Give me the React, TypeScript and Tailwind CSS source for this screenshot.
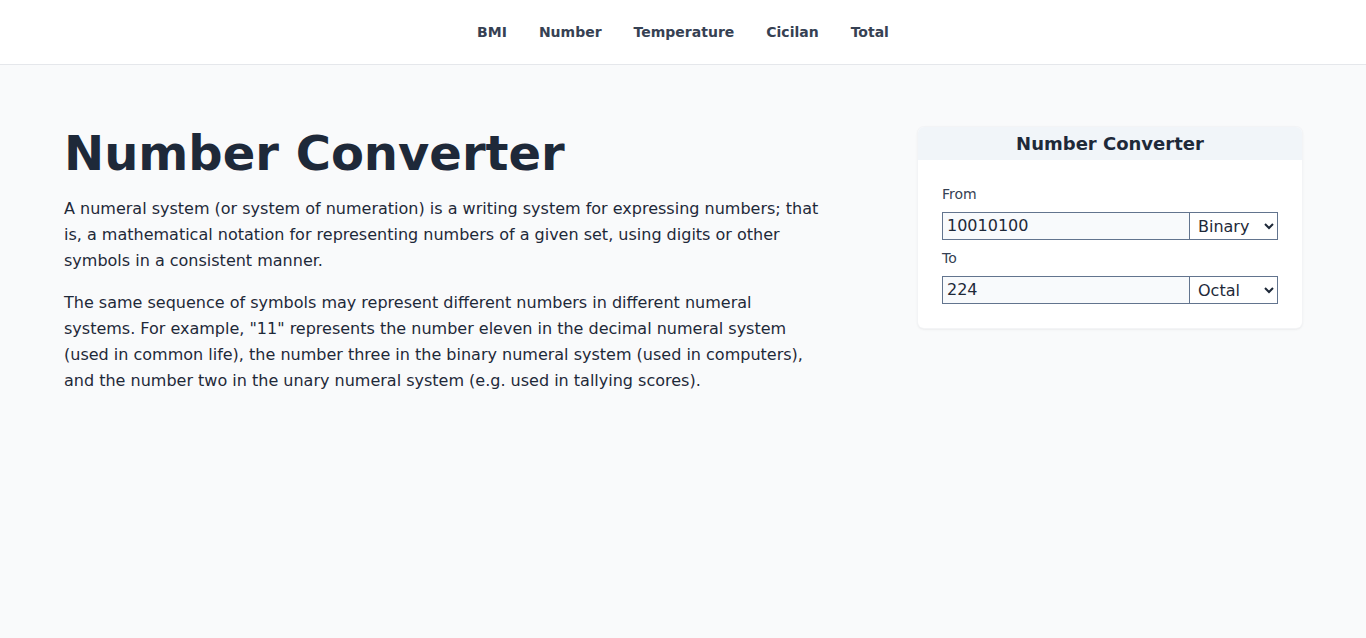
import { useState } from 'react';

const links = ['BMI', 'Number', 'Temperature', 'Cicilan', 'Total'];

export default function App() {
  const [from, setFrom] = useState('10010100');

  return (
    <div className="min-h-[638px] bg-gray-50 text-gray-800 font-['DejaVu_Sans',sans-serif]">
      <header className="h-[65px] bg-white border-b border-gray-200 flex items-center justify-center">
        <nav className="flex gap-8 -mt-px">
          {links.map((l) => (
            <a key={l} href="#" className="text-sm font-bold text-gray-700">
              {l}
            </a>
          ))}
        </nav>
      </header>

      <main className="flex justify-between px-16 pt-[61px]">
        <section className="w-[760px]">
          <h1 className="text-5xl font-bold text-gray-800 leading-[54px]">Number Converter</h1>
          <p className="mt-4 leading-[26px]">
            A numeral system (or system of numeration) is a writing system for expressing numbers; that
            is, a mathematical notation for representing numbers of a given set, using digits or other
            symbols in a consistent manner.
          </p>
          <p className="mt-4 leading-[26px]">
            The same sequence of symbols may represent different numbers in different numeral
            systems. For example, "11" represents the number eleven in the decimal numeral system
            (used in common life), the number three in the binary numeral system (used in computers),
            and the number two in the unary numeral system (e.g. used in tallying scores).
          </p>
        </section>

        <div className="w-96 mt-px self-start bg-white rounded-md shadow-sm ring-1 ring-gray-100 overflow-hidden">
          <div className="h-[33px] bg-slate-100 flex items-center justify-center">
            <h2 className="text-lg font-bold text-gray-800">Number Converter</h2>
          </div>
          <div className="px-6 pt-6 pb-6">
            <label className="block text-sm text-gray-700 leading-5">From</label>
            <div className="flex mt-2">
              <input
                value={from}
                onChange={(e) => setFrom(e.target.value)}
                className="flex-1 min-w-0 h-7 px-1 pb-0.5 bg-slate-50 border border-slate-500 text-gray-800"
              />
              <select className="w-[88px] h-7 pl-1 bg-white border border-l-0 border-slate-500 text-gray-800">
                <option>Binary</option>
                <option>Octal</option>
                <option>Decimal</option>
                <option>Hexadecimal</option>
              </select>
            </div>
            <label className="block text-sm text-gray-700 leading-5 mt-2">To</label>
            <div className="flex mt-2">
              <input
                value="224"
                readOnly
                className="flex-1 min-w-0 h-7 px-1 pb-0.5 bg-slate-50 border border-slate-500 text-gray-800"
              />
              <select
                defaultValue="Octal"
                className="w-[88px] h-7 pl-1 bg-white border border-l-0 border-slate-500 text-gray-800"
              >
                <option>Binary</option>
                <option>Octal</option>
                <option>Decimal</option>
                <option>Hexadecimal</option>
              </select>
            </div>
          </div>
        </div>
      </main>
    </div>
  );
}
